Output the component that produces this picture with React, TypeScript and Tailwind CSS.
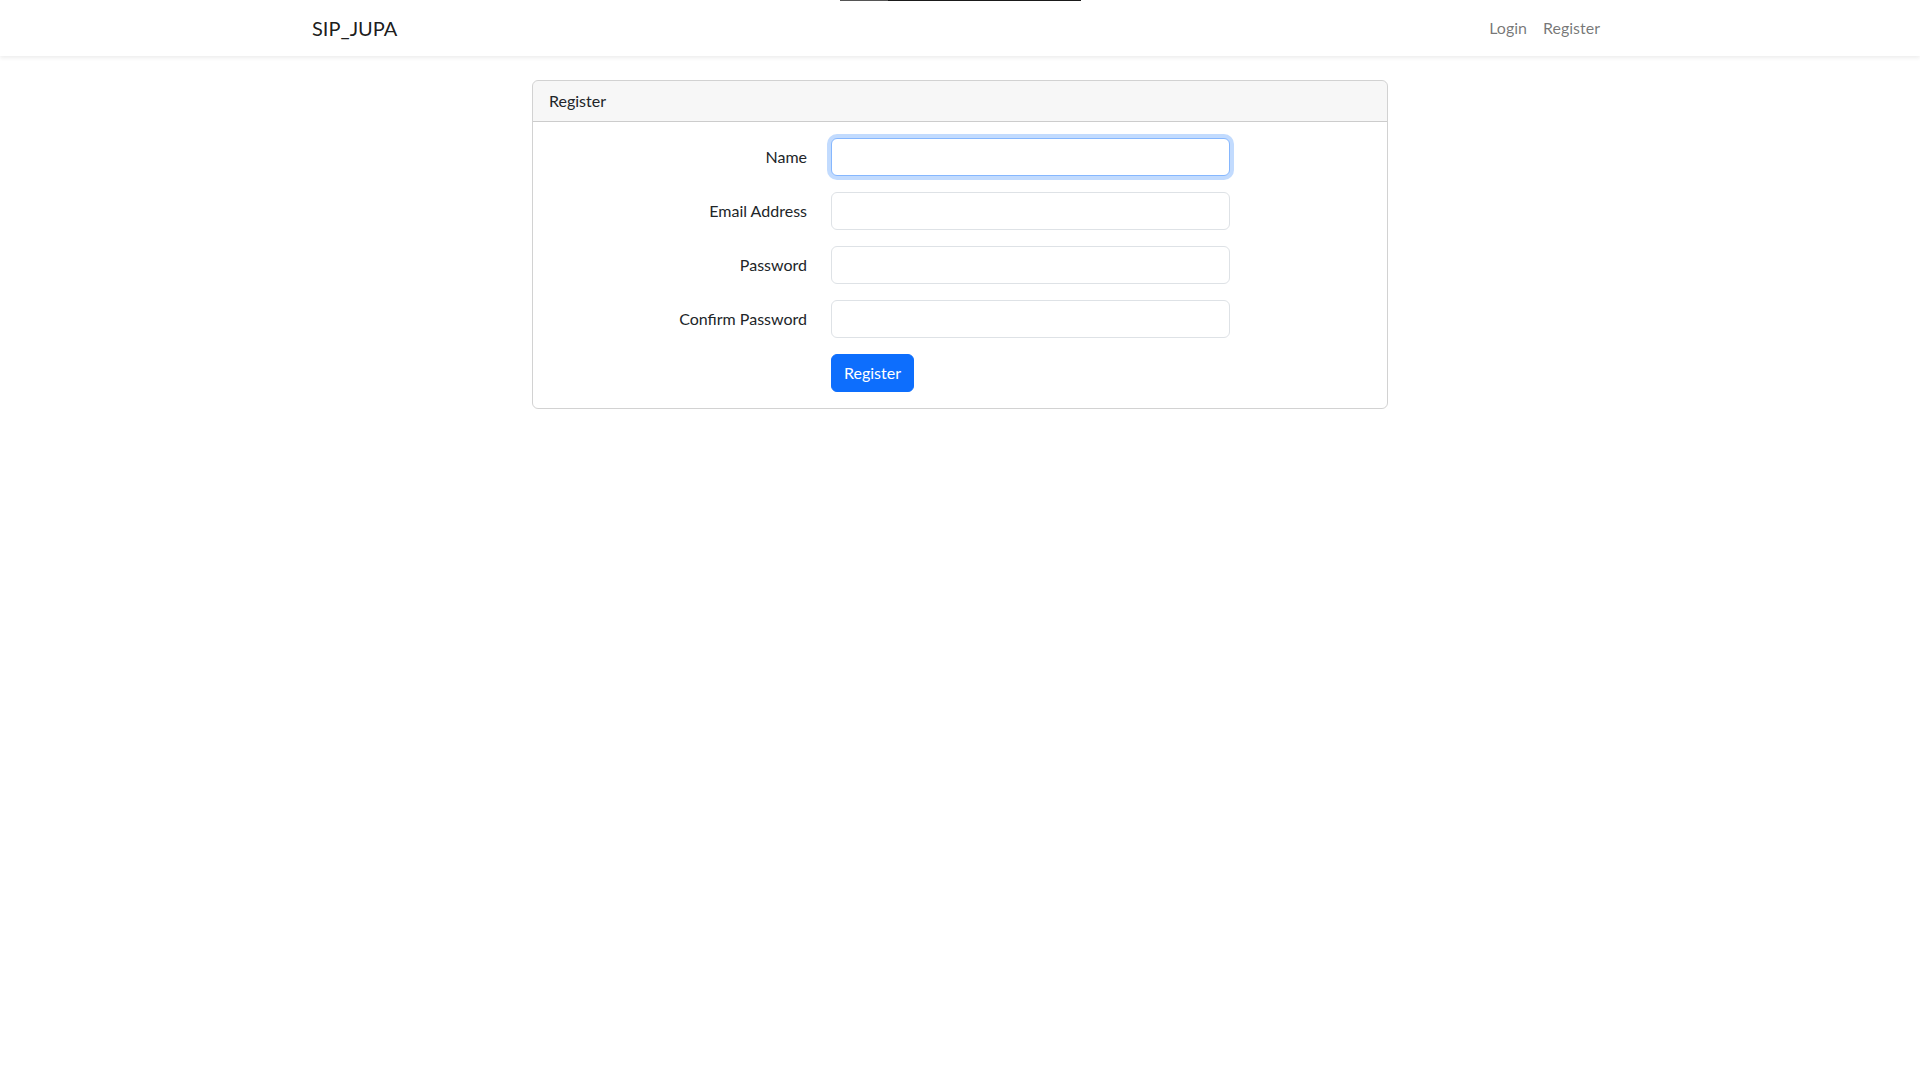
const fields = [
  { label: 'Name', type: 'text', focused: true },
  { label: 'Email Address', type: 'email' },
  { label: 'Password', type: 'password' },
  { label: 'Confirm Password', type: 'password' },
];

export default function App() {
  return (
    <div className="relative min-h-screen bg-white text-[16px] leading-[1.5] text-[#212529] font-['Lato','Open_Sans',sans-serif]">
      {/* stray progress line at the very top */}
      <div className="absolute left-[840px] top-0 flex h-px w-[241px]">
        <div className="w-[48px] bg-[#555]" />
        <div className="flex-1 bg-[#1a1a1a]" />
      </div>

      {/* Navbar */}
      <nav className="bg-white py-2 shadow-[0_2px_4px_rgba(0,0,0,0.075)]">
        <div className="mx-auto flex w-[1320px] items-center justify-between px-3">
          <a className="py-[5px] text-[20px] leading-[30px] text-[rgba(0,0,0,0.9)]">SIP_JUPA</a>
          <ul className="flex">
            <li>
              <a className="block px-2 py-2 text-[rgba(0,0,0,0.55)]">Login</a>
            </li>
            <li>
              <a className="block px-2 py-2 text-[rgba(0,0,0,0.55)]">Register</a>
            </li>
          </ul>
        </div>
      </nav>

      {/* Main */}
      <main className="py-6">
        <div className="mx-auto w-[1320px] px-3">
          <div className="flex justify-center">
            <div className="w-[856px] rounded-[6px] border border-[rgba(0,0,0,0.175)]">
              <div className="rounded-t-[5px] border-b border-[rgba(0,0,0,0.175)] bg-[rgba(0,0,0,0.03)] px-4 py-2">
                Register
              </div>
              <div className="p-4">
                <form className="flex flex-col gap-4" onSubmit={(e) => e.preventDefault()}>
                  {fields.map((f) => (
                    <div key={f.label} className="flex">
                      <label className="w-[258px] shrink-0 pt-[7px] pb-[7px] text-right">{f.label}</label>
                      <div className="ml-6 w-[399px]">
                        <input
                          type={f.type}
                          className={
                            f.focused
                              ? 'block h-[38px] w-full rounded-[6px] border border-[#86b7fe] bg-white px-3 outline-none shadow-[0_0_0_4px_rgba(13,110,253,0.25)]'
                              : 'block h-[38px] w-full rounded-[6px] border border-[#dee2e6] bg-white px-3 outline-none'
                          }
                        />
                      </div>
                    </div>
                  ))}
                  <div className="flex">
                    <div className="ml-[282px]">
                      <button
                        type="submit"
                        className="h-[38px] rounded-[6px] border border-[#0d6efd] bg-[#0d6efd] px-3 text-white"
                      >
                        Register
                      </button>
                    </div>
                  </div>
                </form>
              </div>
            </div>
          </div>
        </div>
      </main>
    </div>
  );
}
